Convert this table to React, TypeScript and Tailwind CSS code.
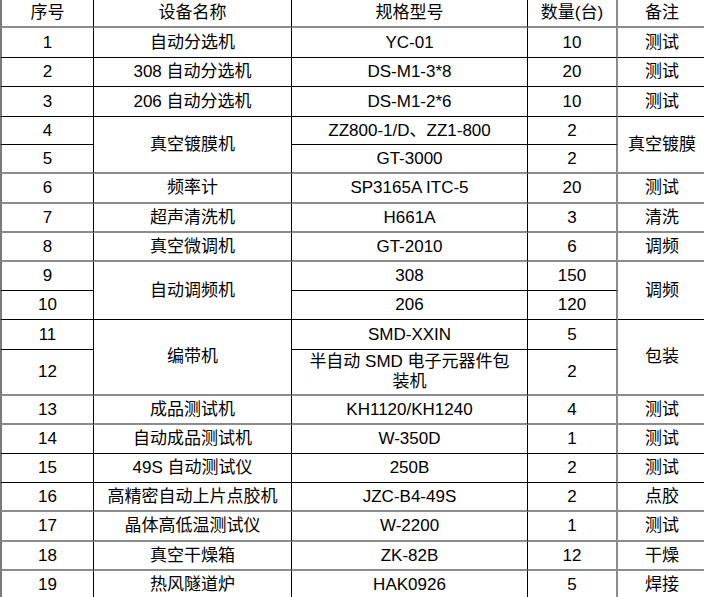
import React from 'react';

type Row = {
  no: number;
  name?: string;
  nameSpan?: number;
  spec: React.ReactNode;
  qty: string;
  note?: string;
  noteSpan?: number;
  gray?: boolean;
  h: string;
};

const rows: Row[] = [
  { no: 1, name: '自动分选机', spec: 'YC-01', qty: '10', note: '测试', h: 'h-[30px]' },
  { no: 2, name: '308 自动分选机', spec: 'DS-M1-3*8', qty: '20', note: '测试', h: 'h-[29px]' },
  { no: 3, name: '206 自动分选机', spec: 'DS-M1-2*6', qty: '10', note: '测试', h: 'h-[30px]' },
  { no: 4, name: '真空镀膜机', nameSpan: 2, spec: 'ZZ800-1/D、ZZ1-800', qty: '2', note: '真空镀膜', noteSpan: 2, h: 'h-[28px]' },
  { no: 5, spec: 'GT-3000', qty: '2', gray: true, h: 'h-[29px]' },
  { no: 6, name: '频率计', spec: 'SP3165A ITC-5', qty: '20', note: '测试', gray: true, h: 'h-[30px]' },
  { no: 7, name: '超声清洗机', spec: 'H661A', qty: '3', note: '清洗', gray: true, h: 'h-[29px]' },
  { no: 8, name: '真空微调机', spec: 'GT-2010', qty: '6', note: '调频', gray: true, h: 'h-[29px]' },
  { no: 9, name: '自动调频机', nameSpan: 2, spec: '308', qty: '150', note: '调频', noteSpan: 2, h: 'h-[29px]' },
  { no: 10, spec: '206', qty: '120', h: 'h-[29px]' },
  { no: 11, name: '编带机', nameSpan: 2, spec: 'SMD-XXIN', qty: '5', note: '包装', noteSpan: 2, h: 'h-[30px]' },
  {
    no: 12,
    spec: (
      <>
        半自动 SMD 电子元器件包
        <br />
        装机
      </>
    ),
    qty: '2',
    gray: true,
    h: 'h-[46px]',
  },
  { no: 13, name: '成品测试机', spec: 'KH1120/KH1240', qty: '4', note: '测试', gray: true, h: 'h-[29px]' },
  { no: 14, name: '自动成品测试机', spec: 'W-350D', qty: '1', note: '测试', h: 'h-[29px]' },
  { no: 15, name: '49S 自动测试仪', spec: '250B', qty: '2', note: '测试', h: 'h-[29px]' },
  { no: 16, name: '高精密自动上片点胶机', spec: 'JZC-B4-49S', qty: '2', note: '点胶', gray: true, h: 'h-[29px]' },
  { no: 17, name: '晶体高低温测试仪', spec: 'W-2200', qty: '1', note: '测试', gray: true, h: 'h-[30px]' },
  { no: 18, name: '真空干燥箱', spec: 'ZK-82B', qty: '12', note: '干燥', gray: true, h: 'h-[29px]' },
  { no: 19, name: '热风隧道炉', spec: 'HAK0926', qty: '5', note: '焊接', h: 'h-[29px]' },
];

const black = 'border-b border-b-black';
const grayB = 'border-b-2 border-b-[#8c8c8c]';

export default function App() {
  return (
    <div
      className="w-[704px] h-[597px] overflow-hidden bg-white text-black text-[17px]"
      style={{ fontFamily: '"Liberation Sans", "Noto Sans CJK SC", sans-serif' }}
    >
      <table className="table-fixed w-[706px] border-separate border-spacing-0 text-center">
        <colgroup>
          <col className="w-[94px]" />
          <col className="w-[198px]" />
          <col className="w-[236px]" />
          <col className="w-[90px]" />
          <col className="w-[88px]" />
        </colgroup>
        <thead>
          <tr className="h-[28px]">
            <th className={`font-normal border-l-2 border-l-[#7a7a7a] border-r border-r-black ${grayB}`}>序号</th>
            <th className={`font-normal border-r border-r-black ${grayB}`}>设备名称</th>
            <th className={`font-normal border-r border-r-black ${grayB}`}>规格型号</th>
            <th className={`font-normal border-r-2 border-r-[#8c8c8c] ${grayB}`}>数量(台)</th>
            <th className={`font-normal ${grayB}`}>备注</th>
          </tr>
        </thead>
        <tbody>
          {rows.map((r, i) => {
            const bottom = r.gray ? grayB : black;
            const spanBottom = (span?: number) => {
              const last = rows[i + (span ?? 1) - 1];
              return last.gray ? grayB : black;
            };
            return (
              <tr key={r.no} className={r.h}>
                <td className={`p-0 border-l-2 border-l-[#7a7a7a] border-r border-r-black ${bottom}`}>{r.no}</td>
                {r.name && (
                  <td rowSpan={r.nameSpan} className={`p-0 border-r border-r-black ${spanBottom(r.nameSpan)}`}>
                    {r.name}
                  </td>
                )}
                <td className={`p-0 leading-[20px] border-r border-r-black ${bottom}`}>{r.spec}</td>
                <td className={`p-0 border-r-2 border-r-[#8c8c8c] ${bottom}`}>{r.qty}</td>
                {r.note && (
                  <td rowSpan={r.noteSpan} className={`p-0 ${spanBottom(r.noteSpan)}`}>
                    {r.note}
                  </td>
                )}
              </tr>
            );
          })}
        </tbody>
      </table>
    </div>
  );
}
